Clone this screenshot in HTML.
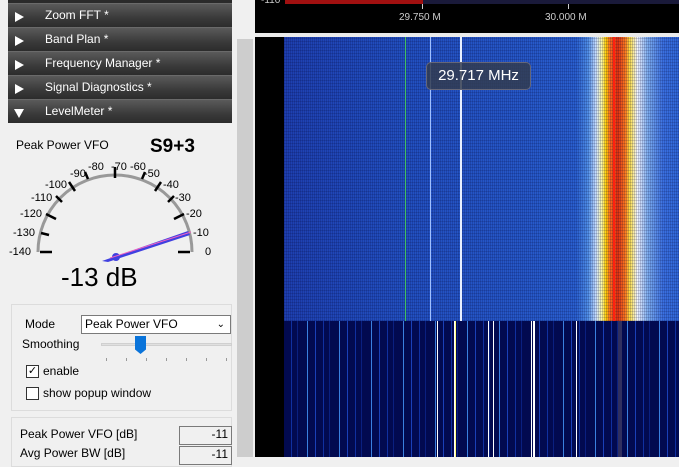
<!DOCTYPE html>
<html><head><style>
*{margin:0;padding:0;box-sizing:border-box}
body{width:679px;height:457px;overflow:hidden;background:#f0f0f0;font-family:"Liberation Sans",sans-serif;position:relative}
.h{position:absolute;left:8px;width:224px;height:24px;background:linear-gradient(#5a5a5a,#3a3a3a 60%,#2c2c2c);border-top:1px solid #6a6a6a;color:#fff;font-size:12px;line-height:23px}
.h span{position:absolute;left:37px}
.h i{position:absolute;left:7px;top:8px;width:0;height:0;border-left:9px solid #fff;border-top:5px solid transparent;border-bottom:5px solid transparent}
.h i.d{left:6px;top:9px;border-top:9px solid #fff;border-left:5px solid transparent;border-right:5px solid transparent;border-bottom:0}
.a{position:absolute}
.t{font-size:12px;color:#000}
</style></head><body>
<div class="a" style="left:8px;top:0;width:224px;height:3px;background:#2a2a2a"></div>
<div class="h" style="top:3px"><i></i><span>Zoom FFT *</span></div>
<div class="h" style="top:27px"><i></i><span>Band Plan *</span></div>
<div class="h" style="top:51px"><i></i><span>Frequency Manager *</span></div>
<div class="h" style="top:75px"><i></i><span>Signal Diagnostics *</span></div>
<div class="h" style="top:99px"><i class="d"></i><span>LevelMeter *</span></div>
<div class="a" style="left:237px;top:39px;width:16px;height:418px;background:#cdcdcd"></div>

<div class="a t" style="left:16px;top:138px">Peak Power VFO</div>
<div class="a" style="left:150px;top:136px;font-size:19px;font-weight:bold">S9+3</div>
<svg class="a" style="left:0;top:150px" width="232" height="120" viewBox="0 150 232 120">
<path d="M38 252 A77 77 0 0 1 192 252" fill="none" stroke="#999" stroke-width="3"/>
<g stroke="#000" stroke-width="2.5">
<line x1="40" y1="252" x2="52" y2="252"/>
<line x1="41" y1="233" x2="49" y2="235"/>
<line x1="46" y1="214" x2="56" y2="219"/>
<line x1="56" y1="196" x2="62" y2="202"/>
<line x1="69" y1="182" x2="75" y2="191"/>
<line x1="85" y1="172" x2="88" y2="179"/>
<line x1="115" y1="178" x2="115" y2="167"/>
<line x1="145" y1="172" x2="142" y2="179"/>
<line x1="161" y1="182" x2="155" y2="191"/>
<line x1="174" y1="196" x2="168" y2="202"/>
<line x1="184" y1="214" x2="174" y2="219"/>
<line x1="189" y1="233" x2="181" y2="235"/>
<line x1="178" y1="252" x2="190" y2="252"/>
</g>
<path d="M102 261 L188 231 L190 235 L108 262 Z" fill="#4040e0"/>
<circle cx="116" cy="257" r="4" fill="#4040e0"/>
<line x1="110" y1="258" x2="191" y2="232" stroke="#f060c0" stroke-width="1"/>
<g font-size="11" fill="#000" font-family="Liberation Sans">
<text x="9" y="255">-140</text><text x="13" y="236">-130</text><text x="20" y="217">-120</text>
<text x="31" y="201">-110</text><text x="45" y="188">-100</text><text x="70" y="177">-90</text>
<text x="88" y="170">-80</text><text x="111" y="170">-70</text><text x="130" y="170">-60</text>
<text x="144" y="177">-50</text><text x="163" y="188">-40</text><text x="175" y="201">-30</text>
<text x="186" y="217">-20</text><text x="193" y="236">-10</text><text x="205" y="255">0</text>
</g>
</svg>
<div class="a" style="left:61px;top:262px;font-size:26px">-13 dB</div>

<div class="a" style="left:11px;top:304px;width:221px;height:107px;border:1px solid #dcdcdc"></div>
<div class="a t" style="left:25px;top:317px">Mode</div>
<div class="a t" style="left:81px;top:315px;width:150px;height:19px;border:1px solid #7a7a7a;background:#fff;padding-left:3px;line-height:17px">Peak Power VFO<span style="position:absolute;right:5px;font-size:10px">&#8964;</span></div>
<div class="a t" style="left:22px;top:337px">Smoothing</div>
<div class="a" style="left:101px;top:343px;width:131px;height:3px;background:#e0e0e0;border:1px solid #d0d0d0"></div>
<div class="a" style="left:135px;top:336px;width:11px;height:18px;background:#0a74da;clip-path:polygon(0 0,100% 0,100% 75%,50% 100%,0 75%)"></div>
<div class="a" style="left:106px;top:358px;width:126px;height:3px;background:repeating-linear-gradient(90deg,#999 0 1px,transparent 1px 20px)"></div>
<div class="a" style="left:26px;top:365px;width:13px;height:13px;border:1px solid #333;background:#fff;font-size:11px;line-height:11px;text-align:center">&#10003;</div>
<div class="a t" style="left:43px;top:364px">enable</div>
<div class="a" style="left:26px;top:387px;width:13px;height:13px;border:1px solid #333;background:#fff"></div>
<div class="a t" style="left:43px;top:386px">show popup window</div>
<div class="a" style="left:11px;top:417px;width:221px;height:50px;border:1px solid #dcdcdc"></div>
<div class="a t" style="left:20px;top:427px">Peak Power VFO [dB]</div>
<div class="a t" style="left:179px;top:426px;width:53px;height:19px;border:1px solid #7a7a7a;text-align:right;padding-right:3px">-11</div>
<div class="a t" style="left:20px;top:446px">Avg Power BW [dB]</div>
<div class="a t" style="left:179px;top:446px;width:53px;height:19px;border:1px solid #7a7a7a;text-align:right;padding-right:3px">-11</div>

<!-- right side -->
<div class="a" style="left:255px;top:0;width:424px;height:457px;background:#000"></div>
<div class="a" style="left:285px;top:0;width:394px;height:4px;background:#1a1a3a"></div>
<div class="a" style="left:285px;top:0;width:138px;height:4px;background:#a01010"></div>
<div class="a" style="left:261px;top:-5px;color:#ccc;font-size:10px">-110</div>
<div class="a" style="left:422px;top:4px;width:1px;height:5px;background:#ccc"></div>
<div class="a" style="left:568px;top:4px;width:1px;height:5px;background:#ccc"></div>
<div class="a" style="left:399px;top:12px;color:#ccc;font-size:10px">29.750 M</div>
<div class="a" style="left:545px;top:12px;color:#ccc;font-size:10px">30.000 M</div>
<div class="a" style="left:255px;top:33px;width:424px;height:4px;background:#eaeaea"></div>
<div class="a" style="left:284px;top:37px;width:395px;height:284px;background:linear-gradient(90deg,#1e40b0 0%,#2250c0 30%,#2658c8 60%,#2a60d0 74%,#5090e8 77%,#c8e0ff 79%,#fff8a0 80.5%,#ffd000 81.5%,#ff7020 82.5%,#e03010 84.5%,#ff8020 86.5%,#ffe040 87.5%,#f0f4ff 89.5%,#80b0f0 92%,#3a70e0 96%,#3068d8 100%)"></div>
<div class="a" style="left:284px;top:37px;width:395px;height:284px;background:repeating-linear-gradient(0deg,rgba(0,0,40,.15) 0 1px,transparent 1px 3px),repeating-linear-gradient(90deg,rgba(0,0,60,.18) 0 1px,transparent 1px 2px)"></div>
<div class="a" style="left:460px;top:37px;width:2px;height:284px;background:#e8f0ff"></div>
<div class="a" style="left:430px;top:37px;width:1px;height:284px;background:#a0c0ff"></div>
<div class="a" style="left:405px;top:37px;width:1px;height:420px;background:#40c060"></div>
<div class="a" style="left:613px;top:37px;width:2px;height:420px;background:#ff2010"></div>
<div class="a" style="left:284px;top:321px;width:395px;height:136px;background:#020a50"></div>
<div class="a" style="left:284px;top:321px;width:395px;height:136px;background:repeating-linear-gradient(90deg,transparent 0 7px,#1030a0 7px 8px,transparent 8px 13px,#0a2080 13px 14px,transparent 14px 23px,#3a80e0 23px 24px,transparent 24px 31px,#1a40b8 31px 32px)"></div>
<div class="a" style="left:437px;top:321px;width:1px;height:136px;background:#fff"></div>
<div class="a" style="left:455px;top:321px;width:1px;height:136px;background:#ffff80"></div>
<div class="a" style="left:454px;top:321px;width:1px;height:136px;background:#fff"></div>
<div class="a" style="left:488px;top:321px;width:1px;height:136px;background:#fff"></div>
<div class="a" style="left:493px;top:321px;width:1px;height:136px;background:#fff"></div>
<div class="a" style="left:531px;top:321px;width:1px;height:136px;background:#fff"></div>
<div class="a" style="left:533px;top:321px;width:2px;height:136px;background:#fff"></div>
<div class="a" style="left:576px;top:321px;width:1px;height:136px;background:#fff"></div>
<div class="a" style="left:618px;top:321px;width:4px;height:136px;background:#303060"></div>
<div class="a" style="left:426px;top:62px;width:105px;height:28px;background:rgba(50,60,80,.85);border:1px solid #667;border-radius:5px;color:#fff;font-size:15px;line-height:26px;text-align:center">29.717 MHz</div>
</body></html>
